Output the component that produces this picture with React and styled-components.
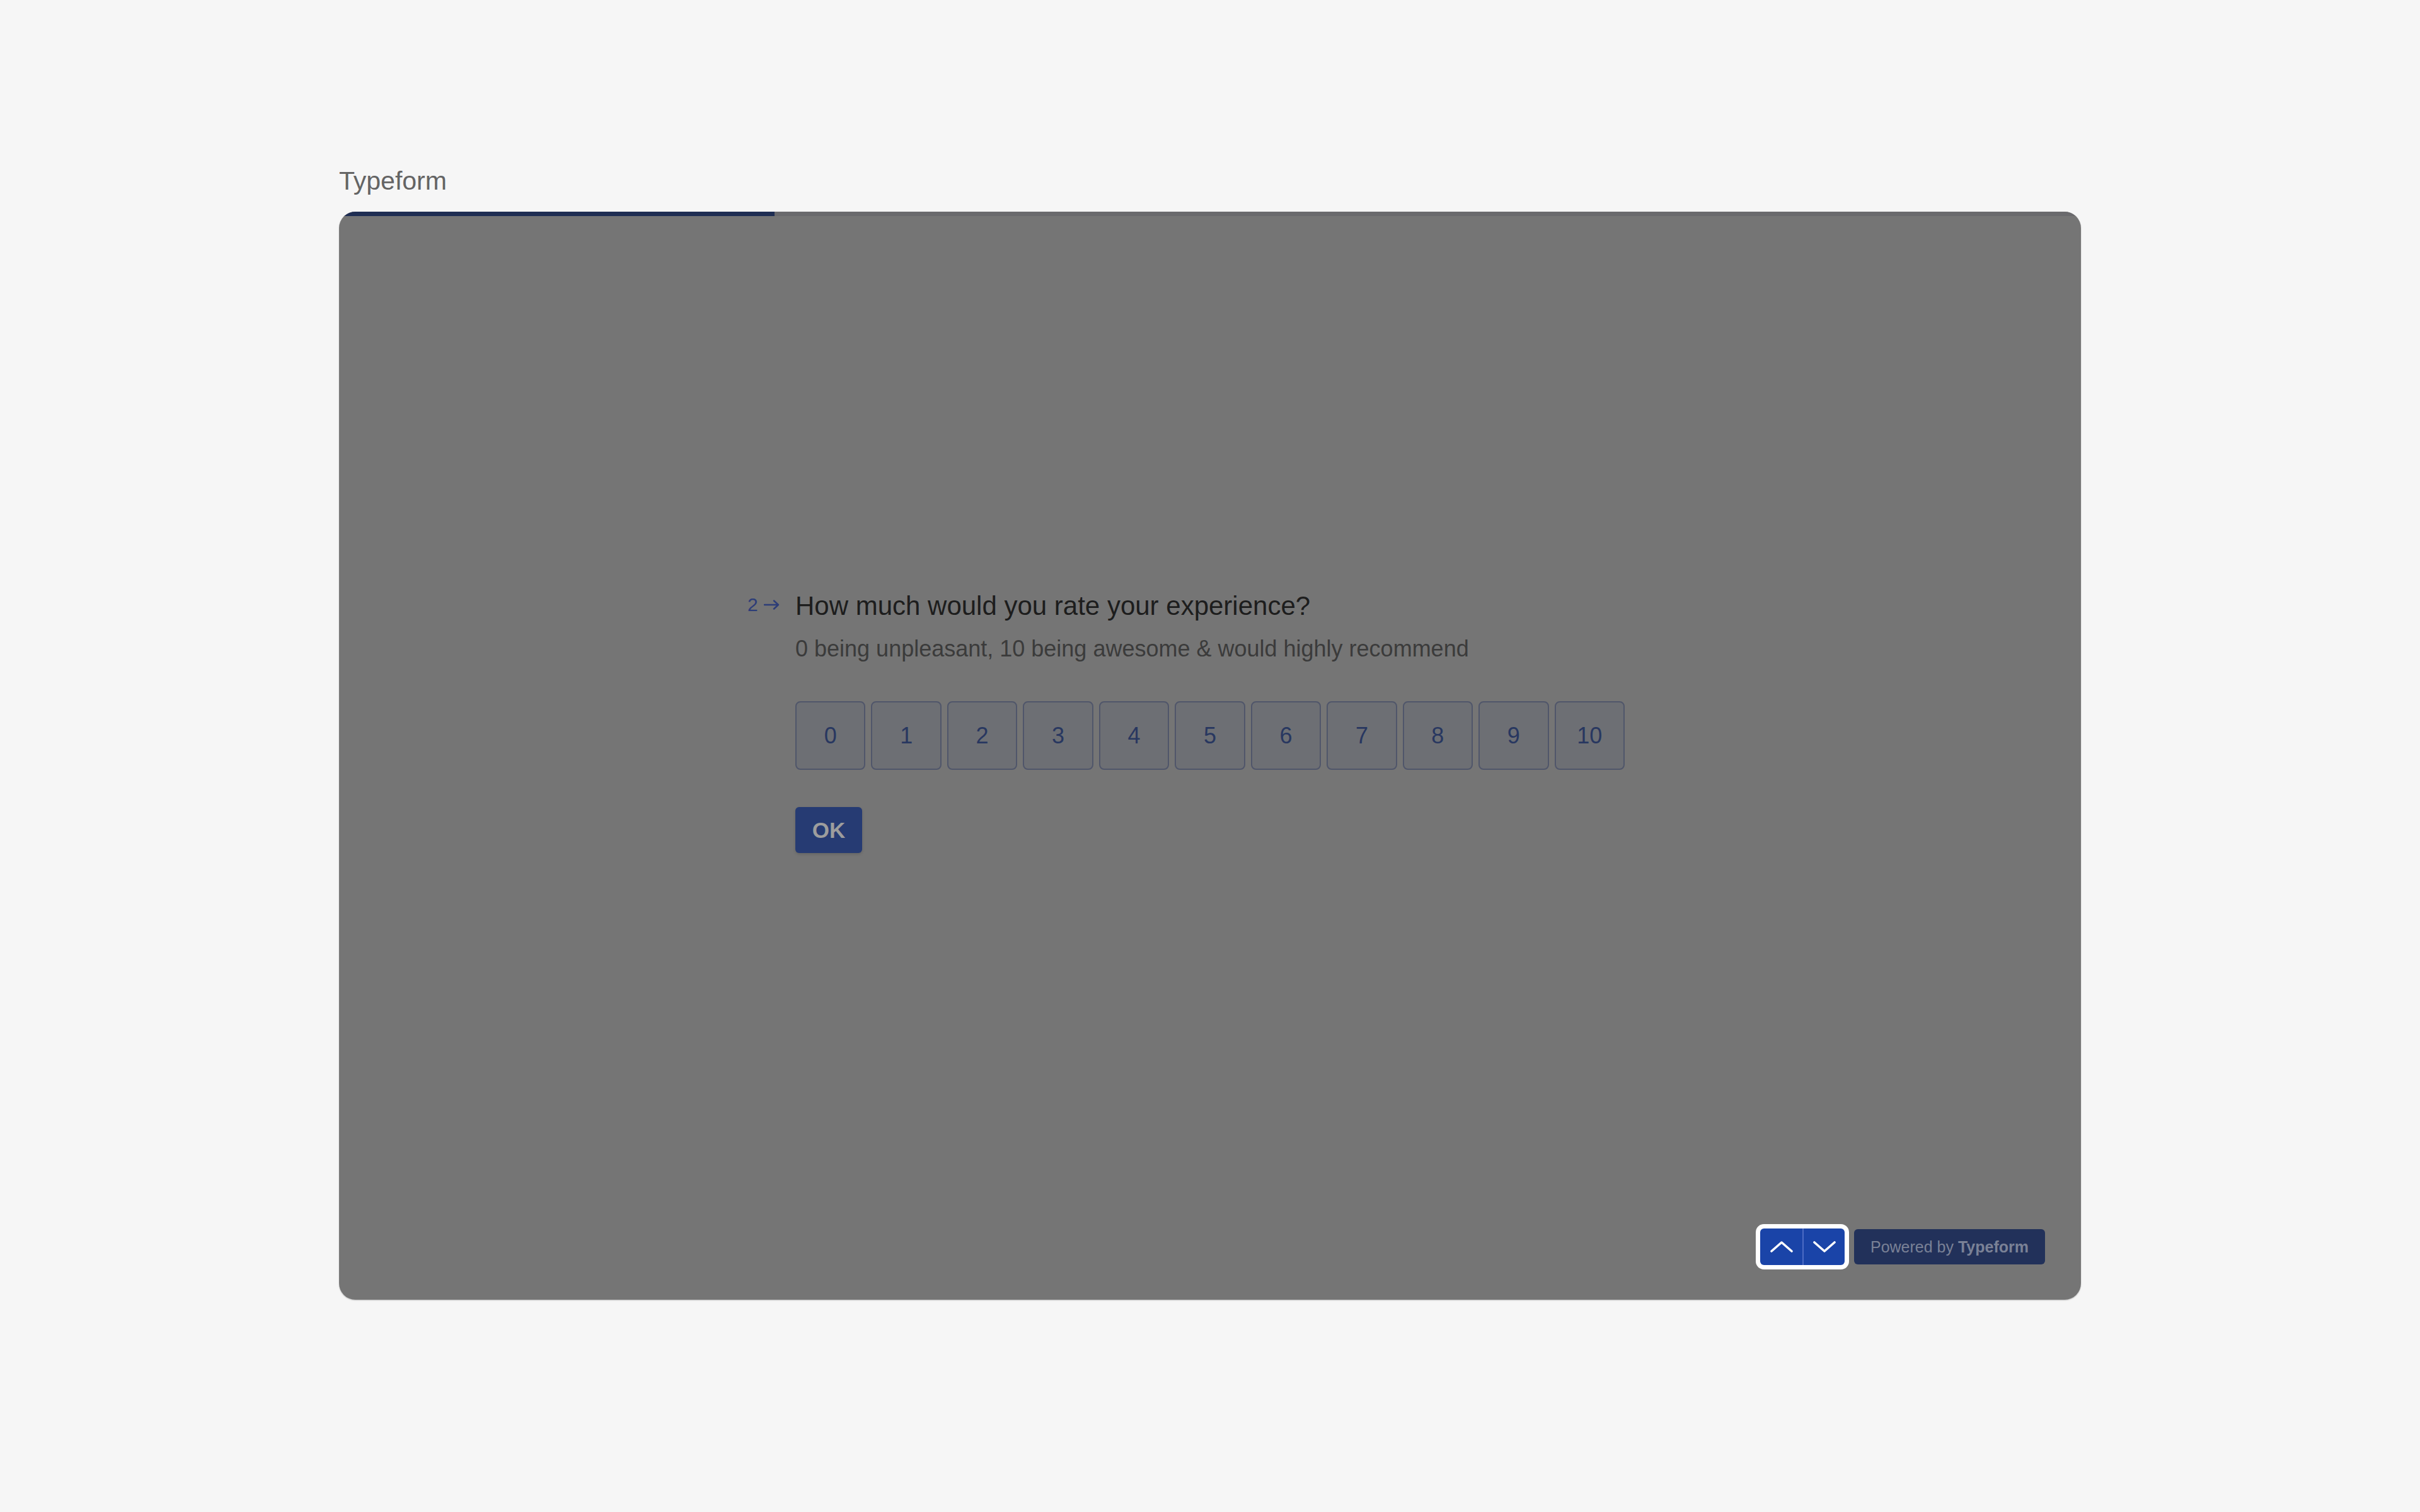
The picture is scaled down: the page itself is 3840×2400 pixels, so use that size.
import styled, { createGlobalStyle } from "styled-components";

const GlobalStyle = createGlobalStyle`
  html, body {
    margin: 0;
    padding: 0;
    background: #f6f6f6;
  }
  body {
    font-family: "Liberation Sans", Arial, sans-serif;
  }
  * {
    box-sizing: border-box;
  }
`;

const Page = styled.div`
  padding: 263px 538px 0;
  min-height: 2400px;
`;

const Title = styled.div`
  font-size: 41px;
  line-height: 48px;
  color: #646464;
  margin-bottom: 25px;
`;

const Frame = styled.div`
  height: 1727px;
  border-radius: 26px;
  overflow: hidden;
  background: #757575;
  display: flex;
  flex-direction: column;
  box-shadow: 0 1px 2px rgba(0, 0, 0, 0.25);
`;

const Progress = styled.div`
  height: 7px;
  background: #6a6a6d;
  flex-shrink: 0;
`;

const ProgressFill = styled.div`
  height: 100%;
  background: #1f2e53;
`;

const Main = styled.div`
  flex: 1;
  display: flex;
  justify-content: center;
  padding-top: 592px;
`;

const Content = styled.div`
  width: 1316px;
`;

const QuestionRow = styled.div`
  display: flex;
  align-items: center;
`;

const QNumber = styled.div`
  display: flex;
  align-items: center;
  gap: 9px;
  width: 76px;
  margin-left: -76px;
  font-size: 30px;
  color: #2d3d78;
  padding-bottom: 4px;
`;

const Question = styled.h1`
  margin: 0;
  font-size: 42px;
  line-height: 54px;
  font-weight: normal;
  color: #1d1d1d;
`;

const Subtitle = styled.p`
  margin: 18px 0 0;
  font-size: 36px;
  line-height: 46px;
  color: #3b3b3b;
`;

const Scale = styled.div`
  display: flex;
  gap: 9px;
  margin-top: 60px;
`;

const ScaleBox = styled.div`
  flex: 1;
  height: 109px;
  border: 2px solid #50566a;
  border-radius: 8px;
  background: #6d6f74;
  display: flex;
  align-items: center;
  justify-content: center;
  font-size: 36px;
  color: #283760;
`;

const OkButton = styled.button`
  margin-top: 59px;
  width: 106px;
  height: 73px;
  border: none;
  border-radius: 6px;
  background: #263b73;
  color: #9d9d9d;
  font-family: "Liberation Sans", Arial, sans-serif;
  font-weight: bold;
  font-size: 35px;
  padding: 0;
  box-shadow: 0 2px 4px rgba(0, 0, 0, 0.15);
`;

const Footer = styled.div`
  display: flex;
  justify-content: flex-end;
  align-items: center;
  gap: 15px;
  padding: 0 57px 55px 0;
`;

const NavGroup = styled.div`
  display: flex;
  background: #1a44a8;
  border-radius: 6px;
  box-shadow: 0 0 0 7px #ffffff;
  overflow: hidden;
`;

const NavButton = styled.button`
  width: 67px;
  height: 58px;
  border: none;
  background: transparent;
  padding: 0;
  display: flex;
  align-items: center;
  justify-content: center;
  border-left: ${(p) => (p.$divided ? "2px solid #4d6cc4" : "none")};
`;

const Powered = styled.div`
  width: 303px;
  height: 56px;
  display: flex;
  align-items: center;
  justify-content: center;
  background: #22315a;
  border-radius: 6px;
  font-size: 25px;
  color: #7a8196;
  white-space: pre;

  b {
    font-weight: bold;
  }
`;

const Arrow = () => (
  <svg width="25" height="16" viewBox="0 0 25 16" fill="none">
    <path
      d="M1 8h22M16 1.5 23 8l-7 6.5"
      stroke="#2d3d78"
      strokeWidth="2.4"
      strokeLinecap="round"
      strokeLinejoin="round"
    />
  </svg>
);

const Chevron = ({ down }) => (
  <svg width="36" height="18" viewBox="0 0 36 18" fill="none">
    <path
      d={down ? "M2 2 18 16 34 2" : "M2 16 18 2 34 16"}
      stroke="#ffffff"
      strokeWidth="3.6"
      strokeLinecap="round"
      strokeLinejoin="round"
    />
  </svg>
);

const values = [0, 1, 2, 3, 4, 5, 6, 7, 8, 9, 10];

const App = () => {
  return (
    <>
      <GlobalStyle />
      <Page>
        <Title>Typeform</Title>
        <Frame>
          <Progress>
            <ProgressFill style={{ width: "25%" }} />
          </Progress>
          <Main>
            <Content>
              <QuestionRow>
                <QNumber>
                  <span>2</span>
                  <Arrow />
                </QNumber>
                <Question>How much would you rate your experience?</Question>
              </QuestionRow>
              <Subtitle>
                0 being unpleasant, 10 being awesome &amp; would highly recommend
              </Subtitle>
              <Scale>
                {values.map((v) => (
                  <ScaleBox key={v}>{v}</ScaleBox>
                ))}
              </Scale>
              <OkButton>OK</OkButton>
            </Content>
          </Main>
          <Footer>
            <NavGroup>
              <NavButton>
                <Chevron />
              </NavButton>
              <NavButton $divided>
                <Chevron down />
              </NavButton>
            </NavGroup>
            <Powered>
              Powered by <b>Typeform</b>
            </Powered>
          </Footer>
        </Frame>
      </Page>
    </>
  );
};

export default App;
